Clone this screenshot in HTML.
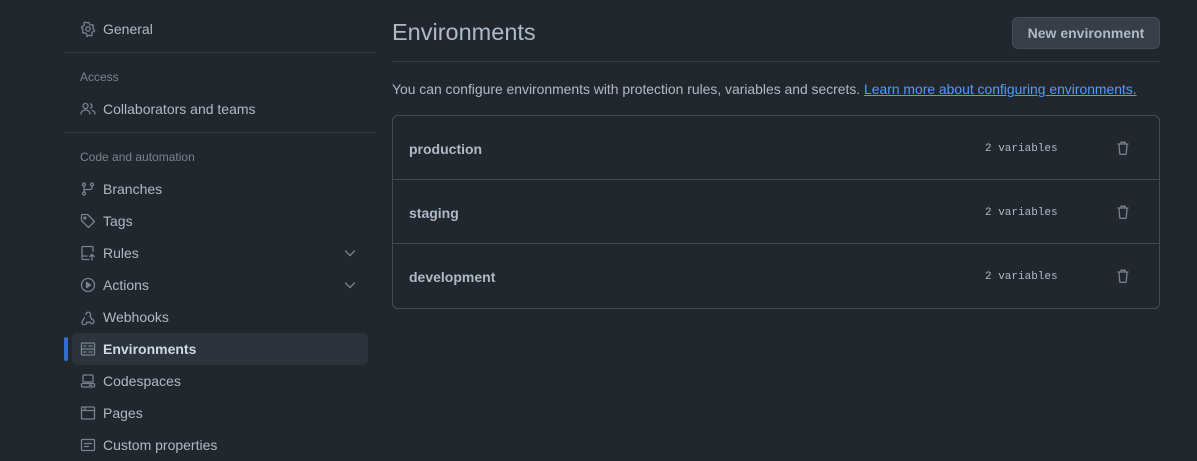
<!DOCTYPE html>
<html><head><meta charset="utf-8"><style>
*{box-sizing:border-box;margin:0;padding:0}
body{width:1197px;height:458px;background:#22272e;color:#adbac7;font-family:"Liberation Sans",sans-serif;font-size:14px;position:relative;overflow:hidden}
.a{position:absolute;white-space:nowrap}
.it{position:absolute;left:72px;width:296px;height:32px;display:flex;align-items:center;padding-left:8px;border-radius:6px}
.it svg{width:16px;height:16px;margin-right:7px;fill:none;stroke:#768390;stroke-width:1.3;stroke-linecap:round;stroke-linejoin:round}
.lbl{position:absolute;left:80px;font-size:12px;color:#768390}
.hr{position:absolute;height:1px;background:#373e47}
.chev{position:absolute;right:10px;top:8px}
.row{position:absolute;left:393px;width:766px;height:64px;border-top:1px solid #444c56}
.row b{position:absolute;left:16px;top:25px;font-size:14px;color:#adbac7}
.row .v{position:absolute;left:592px;top:27px;font-family:"Liberation Mono",monospace;font-size:11px;color:#adbac7}
.row svg{position:absolute;left:722px;top:24px}
</style></head><body>
<div class="it" style="top:13px"><svg viewBox="0 0 16 16"><circle cx="8" cy="8" r="2.2"/><path d="M8 1.5l1.2.3.4 1.6 1.4.8 1.6-.5 1 1.2-.6 1.5.1 1.6 1.3 1-.3 1.5-1.6.4-.8 1.4.5 1.6-1.2 1-1.5-.6-1.6.1-1 1.3L8 14.5l-1.2-.3-.4-1.6-1.4-.8-1.6.5-1-1.2.6-1.5-.1-1.6-1.3-1 .3-1.5 1.6-.4.8-1.4-.5-1.6 1.2-1 1.5.6 1.6-.1z"/></svg>General</div>
<div class="hr" style="left:64px;width:312px;top:52px"></div>
<div class="lbl" style="top:70px">Access</div>
<div class="it" style="top:93px"><svg viewBox="0 0 16 16"><circle cx="5.5" cy="5" r="2.5"/><path d="M1 13c0-2.5 2-4 4.5-4s4.5 1.5 4.5 4M10.5 2.8a2.4 2.4 0 010 4.4M12 9.3c1.7.6 3 1.9 3 3.7"/></svg>Collaborators and teams</div>
<div class="hr" style="left:64px;width:312px;top:132px"></div>
<div class="lbl" style="top:150px">Code and automation</div>
<div class="it" style="top:173px"><svg viewBox="0 0 16 16"><circle cx="4" cy="3.5" r="1.5"/><circle cx="4" cy="12.5" r="1.5"/><circle cx="12" cy="3.5" r="1.5"/><path d="M4 5v6M12 5v1.5a2 2 0 01-2 2H6a2 2 0 00-2 2"/></svg>Branches</div>
<div class="it" style="top:205px"><svg viewBox="0 0 16 16"><path d="M1.5 2.5v5l7 7 6-6-7-7h-5a1 1 0 00-1 1z"/><circle cx="5" cy="5" r="1"/></svg>Tags</div>
<div class="it" style="top:237px"><svg viewBox="0 0 16 16"><path d="M9 14.5H3a1 1 0 01-1-1v-11a1 1 0 011-1h9a1 1 0 011 1v4M2 11h5M12 15V9.5M9.8 11.5L12 9.3l2.2 2.2"/></svg>Rules<svg class="chev" viewBox="0 0 16 16" style="margin:0"><path d="M3.5 6l4.5 4.5L12.5 6"/></svg></div>
<div class="it" style="top:269px"><svg viewBox="0 0 16 16"><circle cx="8" cy="8" r="6.5"/><path d="M6.5 5.3v5.4L10.5 8z" fill="#768390"/></svg>Actions<svg class="chev" viewBox="0 0 16 16" style="margin:0"><path d="M3.5 6l4.5 4.5L12.5 6"/></svg></div>
<div class="it" style="top:301px"><svg viewBox="0 0 16 16"><path d="M6 5.5a2.3 2.3 0 114 1.5l2 3.5M4.5 8.5L2.6 12a2.3 2.3 0 104 1.3h4.2M11 14.8a2.3 2.3 0 10.5-4.5"/></svg>Webhooks</div>
<div class="it" style="top:333px;background:#2d333b;font-weight:bold;color:#cdd9e5"><svg viewBox="0 0 16 16"><rect x="1.5" y="2" width="13" height="12" rx="1"/><path d="M1.5 8h13M4 5h2M4 11h2M9 5h3M9 11h3"/></svg>Environments</div>
<div class="a" style="left:64px;top:337px;width:4px;height:24px;background:#316dca;border-radius:4px"></div>
<div class="it" style="top:365px"><svg viewBox="0 0 16 16"><rect x="3" y="2" width="10" height="7" rx="1"/><rect x="1.5" y="10.5" width="13" height="3.5" rx="1"/><path d="M9.5 12.3h2"/></svg>Codespaces</div>
<div class="it" style="top:397px"><svg viewBox="0 0 16 16"><rect x="1.5" y="2" width="13" height="12" rx="1"/><path d="M1.5 5.5h13M5 2v3.5"/></svg>Pages</div>
<div class="it" style="top:429px"><svg viewBox="0 0 16 16"><rect x="1.5" y="2.5" width="13" height="11" rx="1"/><path d="M4.5 6.5h7M4.5 9.5h4"/></svg>Custom properties</div>

<div class="a" style="left:392px;top:19px;font-size:23.5px;color:#adbac7">Environments</div>
<div class="a" style="left:1012px;top:17px;width:148px;height:32px;background:#373e47;border:1px solid #444c56;border-radius:6px;font-weight:bold;color:#adbac7;font-size:14px;text-align:center;line-height:30px">New environment</div>
<div class="hr" style="left:392px;width:768px;top:61px;background:#373e47"></div>
<div class="a" style="left:392px;top:81px;font-size:13.9px;color:#adbac7">You can configure environments with protection rules, variables and secrets. <span style="color:#539bf5;text-decoration:underline">Learn more about configuring environments.</span></div>
<div class="a" style="left:392px;top:115px;width:768px;height:194px;border:1px solid #444c56;border-radius:6px"></div>
<div class="row" style="top:116px;border-top:none"><b>production</b><span class="v">2 variables</span><svg width="16" height="16" viewBox="0 0 16 16" fill="none" stroke="#768390" stroke-width="1.3"><path d="M2.5 4h11M6 4V2.3h4V4M4 4l.7 9.5a1 1 0 001 .9h4.6a1 1 0 001-.9L12 4"/></svg></div>
<div class="row" style="top:179px"><b>staging</b><span class="v">2 variables</span><svg width="16" height="16" viewBox="0 0 16 16" fill="none" stroke="#768390" stroke-width="1.3"><path d="M2.5 4h11M6 4V2.3h4V4M4 4l.7 9.5a1 1 0 001 .9h4.6a1 1 0 001-.9L12 4"/></svg></div>
<div class="row" style="top:243px"><b>development</b><span class="v">2 variables</span><svg width="16" height="16" viewBox="0 0 16 16" fill="none" stroke="#768390" stroke-width="1.3"><path d="M2.5 4h11M6 4V2.3h4V4M4 4l.7 9.5a1 1 0 001 .9h4.6a1 1 0 001-.9L12 4"/></svg></div>
</body></html>
